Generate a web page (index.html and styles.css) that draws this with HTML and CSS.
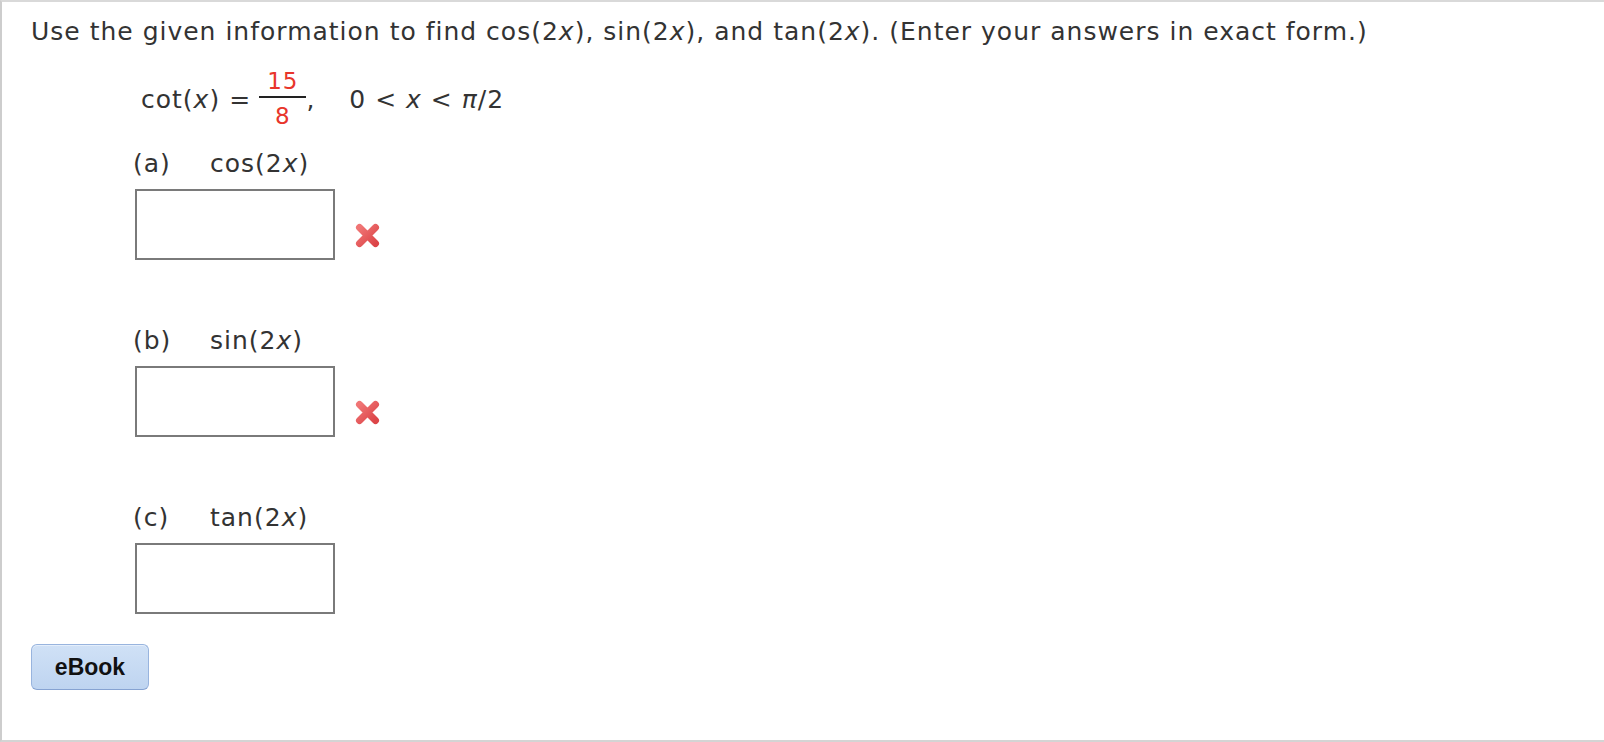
FILE: index.html
```html
<!DOCTYPE html>
<html>
<head>
<meta charset="utf-8">
<title>Double-angle question</title>
<link rel="stylesheet" href="styles.css">
</head>
<body>
<div class="frame">
  <p class="prompt">Use the given information to find cos(2<i>x</i>), sin(2<i>x</i>), and tan(2<i>x</i>). (Enter your answers in exact form.)</p>
  <div class="given"><span class="fn">cot(<i>x</i>)</span><span class="eq">=</span><span class="frac"><span class="num">15</span><span class="bar"></span><span class="den">8</span></span>,<span class="cond">0 &lt; <i>x</i> &lt; <i>π</i>/2</span></div>

  <div class="part part-first">
    <div class="label"><span class="letter">(a)</span><span>cos(2<i>x</i>)</span></div>
    <div class="answer">
      <input class="box" type="text" aria-label="cos(2x)">
      <svg class="wrong" viewBox="0 0 25 25" aria-hidden="true">
        <defs>
          <linearGradient id="xg1" x1="0" y1="0" x2="1" y2="1">
            <stop offset="0" stop-color="#f07575"/>
            <stop offset="1" stop-color="#dc4548"/>
          </linearGradient>
        </defs>
        <path d="M4.5 4.5 L20.5 20.5 M20.5 4.5 L4.5 20.5" stroke="url(#xg1)" stroke-width="7" stroke-linecap="round" fill="none"/>
      </svg>
    </div>
  </div>

  <div class="part">
    <div class="label"><span class="letter">(b)</span><span>sin(2<i>x</i>)</span></div>
    <div class="answer">
      <input class="box" type="text" aria-label="sin(2x)">
      <svg class="wrong" viewBox="0 0 25 25" aria-hidden="true">
        <defs>
          <linearGradient id="xg2" x1="0" y1="0" x2="1" y2="1">
            <stop offset="0" stop-color="#f07575"/>
            <stop offset="1" stop-color="#dc4548"/>
          </linearGradient>
        </defs>
        <path d="M4.5 4.5 L20.5 20.5 M20.5 4.5 L4.5 20.5" stroke="url(#xg2)" stroke-width="7" stroke-linecap="round" fill="none"/>
      </svg>
    </div>
  </div>

  <div class="part">
    <div class="label"><span class="letter">(c)</span><span>tan(2<i>x</i>)</span></div>
    <div class="answer">
      <input class="box" type="text" aria-label="tan(2x)">
    </div>
  </div>

  <button class="ebook" type="button">eBook</button>
</div>
</body>
</html>
```

FILE: styles.css
```css
html, body {
  margin: 0;
  padding: 0;
  background: #ffffff;
}

.frame {
  box-sizing: border-box;
  height: 742px;
  border-top: 2px solid #d9d9d9;
  border-left: 2px solid #cdcdcd;
  border-bottom: 2px solid #d4d4d4;
  padding: 15px 0 0 29px;
  font-family: "DejaVu Sans", Verdana, sans-serif;
  font-size: 25px;
  line-height: 30px;
  letter-spacing: 1px;
  color: #333333;
}

.prompt {
  margin: 0;
  white-space: nowrap;
}

.given {
  margin: 24px 0 0 110px;
  white-space: nowrap;
}

.eq {
  margin: 0 8px 0 9px;
}

.frac {
  display: inline-block;
  vertical-align: -16px;
  font-size: 23px;
  line-height: 20px;
  color: #e8352b;
  text-align: center;
}

.num,
.den {
  display: block;
  padding: 0 8px;
}

.bar {
  display: block;
  height: 2px;
  background: #222222;
  margin: 5px 0 8px;
}

.cond {
  margin-left: 34px;
}

.part {
  margin: 66px 0 0 102px;
}

.part-first {
  margin-top: 23px;
}

.label {
  display: flex;
}

.letter {
  width: 77px;
}

.answer {
  display: flex;
  align-items: flex-end;
  margin-top: 10px;
}

.box {
  box-sizing: border-box;
  width: 200px;
  height: 71px;
  margin: 0 0 0 2px;
  padding: 0 6px;
  border: 2px solid #7a7a7a;
  border-radius: 0;
  background: #ffffff;
  font: 25px "DejaVu Sans", sans-serif;
  outline: none;
}

.wrong {
  width: 25px;
  height: 25px;
  margin: 0 0 12px 20px;
}

.ebook {
  display: block;
  box-sizing: border-box;
  width: 118px;
  height: 46px;
  margin-top: 30px;
  padding: 0;
  border: 1px solid #98b4de;
  border-bottom-color: #86a3d2;
  border-radius: 6px;
  background: linear-gradient(#d0e1f6, #bed4f0);
  box-shadow: inset 0 1px 0 #e4eefb;
  font-family: "Liberation Sans", Arial, sans-serif;
  font-weight: bold;
  font-size: 23px;
  letter-spacing: 0;
  color: #111111;
  cursor: pointer;
}
```
